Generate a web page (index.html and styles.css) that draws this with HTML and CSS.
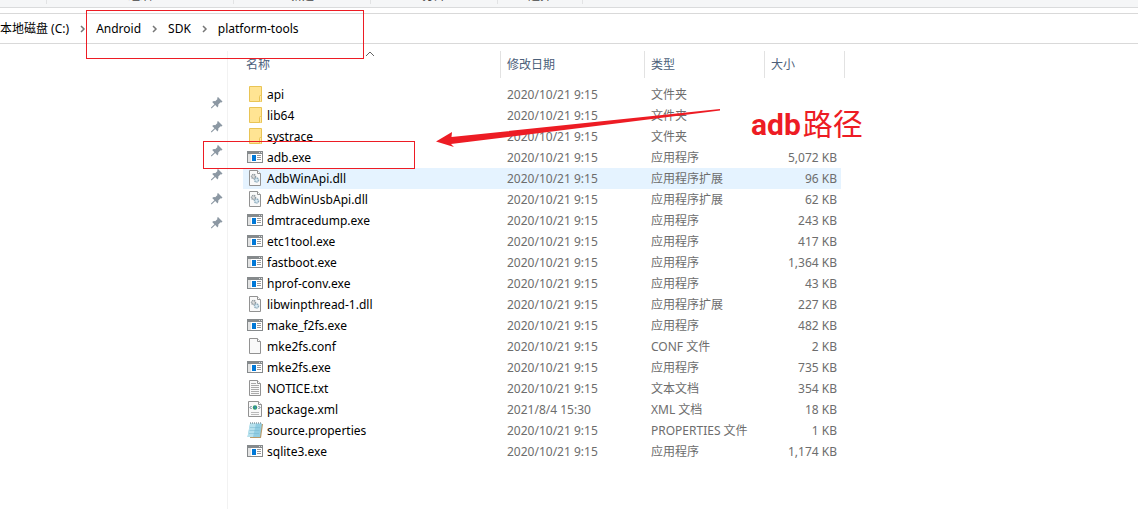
FILE: index.html
```html
<!DOCTYPE html>
<html lang="zh-CN">
<head>
<meta charset="utf-8">
<title>platform-tools</title>
<link rel="stylesheet" href="styles.css">
</head>
<body>
<svg class="defs" aria-hidden="true">
  <symbol id="folder" viewBox="0 0 16 16"><path d="M2.500.5h12v15h-12z" fill="#ffe493" stroke="#e9c455"/><path d="M12.500 15.500V10.500q0-1 1-1t1 1v5" fill="#ffe9a6" stroke="#e9c455"/></symbol>
  <symbol id="exe" viewBox="0 0 16 16"><path fill="#868a8c" d="M0 2h16v12H0z"/><path fill="#fff" d="M1 5h14v8H1z"/><path fill="#e3e4e4" d="M1 5h3v8H1z"/><path fill="#0078d7" d="M5 6h4v6H5z"/><path fill="#999" d="M10 6h4v1h-4zM10 8h4v1h-4zM10 10h4v1h-4z"/><path fill="#ddd" d="M12 3h1v1h-1zM14 3h1v1h-1z"/></symbol>
  <symbol id="page" viewBox="0 0 16 16"><path d="M2.500.5h8l3 3v12h-11z" fill="#f9f9f9" stroke="#929292"/><path d="M10.500.5v3h3" fill="#fff" stroke="#929292"/></symbol>
  <symbol id="dll" viewBox="0 0 16 16"><use href="#page"/><circle cx="6.500" cy="6.500" r="2" fill="#ddd" stroke="#8f989e" stroke-width="1.500" stroke-dasharray="1.200 .6"/><circle cx="9.500" cy="10" r="2" fill="#d9eaf4" stroke="#8eabbc" stroke-width="1.500" stroke-dasharray="1.200 .6"/></symbol>
  <symbol id="txt" viewBox="0 0 16 16"><use href="#page"/><path d="M4 3.500h5M4 5.500h8M4 7.500h8M4 9.500h8M4 11.500h8M4 13.500h8" stroke="#aaa"/></symbol>
  <symbol id="xml" viewBox="0 0 16 16"><path d="M1.500.5h10l3 3v12h-13z" fill="#f9f9f9" stroke="#929292"/><path d="M11.500.5v3h3" fill="#fff" stroke="#929292"/><circle cx="8" cy="6.500" r="2.200" fill="#2e9c68"/><path d="M7 5.500h2v2H8z" fill="#3b83d1"/><path d="M4.500 5 3 6.500 4.500 8M11.500 5 13 6.500 11.500 8" fill="none" stroke="#526b7d"/><path d="M4 11.500h8M4 13.500h8" stroke="#b9b9b9"/></symbol>
  <symbol id="note" viewBox="0 0 16 16"><path d="M4 2h12l-2 14H3z" fill="#b99a69"/><path d="M3 1.500h12L13 15H.5z" fill="#91cde2"/><path d="M3 1.500h6L6 15H.5z" fill="#b7e1ed"/><path d="M3 5.500h10M2.500 8.500h10M2 11.500h10" stroke="#75b6ce" stroke-width=".5"/><path d="M3 1h12" stroke="#536f79" stroke-dasharray="1 1"/></symbol>
  <symbol id="pin" viewBox="0 0 12 12"><path d="M7 0 11.500 4.500 10.500 5.500 9.700 5.200 7.300 7.500Q7.800 9.300 6.500 10.400L4.200 8 .8 11.300 0 11.200 0 10.500 3.400 7.200 1.200 5Q2.500 3.700 4.200 4.300L6.500 2 6.100 1z" fill="#8c98a3"/></symbol>
  <symbol id="chevron" viewBox="0 0 6 8"><path d="M1 1 4 4 1 7" fill="none" stroke="#777" stroke-width="1.500"/></symbol>
</svg>

<div class="ribbon">
  <span class="group group-first"></span>
  <span class="group group-organize">组织</span>
  <span class="group group-new">新建</span>
  <span class="group group-open">打开</span>
  <span class="group group-select">选择</span>
</div>

<nav class="address" aria-label="路径">
  <a href="#">本地磁盘 (C:)</a><svg class="sep"><use href="#chevron"/></svg>
  <a href="#">Android</a><svg class="sep"><use href="#chevron"/></svg>
  <a href="#">SDK</a><svg class="sep"><use href="#chevron"/></svg>
  <a href="#">platform-tools</a>
</nav>

<div class="explorer">
  <aside class="sidebar">
    <svg class="pin"><use href="#pin"/></svg>
    <svg class="pin"><use href="#pin"/></svg>
    <svg class="pin"><use href="#pin"/></svg>
    <svg class="pin"><use href="#pin"/></svg>
    <svg class="pin"><use href="#pin"/></svg>
    <svg class="pin"><use href="#pin"/></svg>
  </aside>
  <main class="files">
    <table>
      <colgroup><col class="col-name"><col class="col-date"><col class="col-type"><col class="col-size"></colgroup>
      <thead><tr>
        <th class="name"><button>名称</button><svg class="sort" viewBox="0 0 10 6"><path d="M1 5 5 1 9 5" fill="none" stroke="#666"/></svg></th>
        <th><button>修改日期</button></th><th><button>类型</button></th><th><button>大小</button></th>
      </tr></thead>
      <tbody>
        <tr><td class="name"><svg><use href="#folder"/></svg>api</td><td>2020/10/21 9:15</td><td>文件夹</td><td class="size"></td></tr>
        <tr><td class="name"><svg><use href="#folder"/></svg>lib64</td><td>2020/10/21 9:15</td><td>文件夹</td><td class="size"></td></tr>
        <tr><td class="name"><svg><use href="#folder"/></svg>systrace</td><td>2020/10/21 9:15</td><td>文件夹</td><td class="size"></td></tr>
        <tr><td class="name"><svg><use href="#exe"/></svg>adb.exe</td><td>2020/10/21 9:15</td><td>应用程序</td><td class="size">5,072 KB</td></tr>
        <tr class="hover"><td class="name"><svg><use href="#dll"/></svg>AdbWinApi.dll</td><td>2020/10/21 9:15</td><td>应用程序扩展</td><td class="size">96 KB</td></tr>
        <tr><td class="name"><svg><use href="#dll"/></svg>AdbWinUsbApi.dll</td><td>2020/10/21 9:15</td><td>应用程序扩展</td><td class="size">62 KB</td></tr>
        <tr><td class="name"><svg><use href="#exe"/></svg>dmtracedump.exe</td><td>2020/10/21 9:15</td><td>应用程序</td><td class="size">243 KB</td></tr>
        <tr><td class="name"><svg><use href="#exe"/></svg>etc1tool.exe</td><td>2020/10/21 9:15</td><td>应用程序</td><td class="size">417 KB</td></tr>
        <tr><td class="name"><svg><use href="#exe"/></svg>fastboot.exe</td><td>2020/10/21 9:15</td><td>应用程序</td><td class="size">1,364 KB</td></tr>
        <tr><td class="name"><svg><use href="#exe"/></svg>hprof-conv.exe</td><td>2020/10/21 9:15</td><td>应用程序</td><td class="size">43 KB</td></tr>
        <tr><td class="name"><svg><use href="#dll"/></svg>libwinpthread-1.dll</td><td>2020/10/21 9:15</td><td>应用程序扩展</td><td class="size">227 KB</td></tr>
        <tr><td class="name"><svg><use href="#exe"/></svg>make_f2fs.exe</td><td>2020/10/21 9:15</td><td>应用程序</td><td class="size">482 KB</td></tr>
        <tr><td class="name"><svg><use href="#page"/></svg>mke2fs.conf</td><td>2020/10/21 9:15</td><td>CONF 文件</td><td class="size">2 KB</td></tr>
        <tr><td class="name"><svg><use href="#exe"/></svg>mke2fs.exe</td><td>2020/10/21 9:15</td><td>应用程序</td><td class="size">735 KB</td></tr>
        <tr><td class="name"><svg><use href="#txt"/></svg>NOTICE.txt</td><td>2020/10/21 9:15</td><td>文本文档</td><td class="size">354 KB</td></tr>
        <tr><td class="name"><svg><use href="#xml"/></svg>package.xml</td><td>2021/8/4 15:30</td><td>XML 文档</td><td class="size">18 KB</td></tr>
        <tr><td class="name"><svg><use href="#note"/></svg>source.properties</td><td>2020/10/21 9:15</td><td>PROPERTIES 文件</td><td class="size">1 KB</td></tr>
        <tr><td class="name"><svg><use href="#exe"/></svg>sqlite3.exe</td><td>2020/10/21 9:15</td><td>应用程序</td><td class="size">1,174 KB</td></tr>
      </tbody>
    </table>
  </main>
</div>

<div class="mark mark-path"></div>
<div class="mark mark-file"></div>
<svg class="arrow" viewBox="0 0 284 38"><path d="M0 32.500 16 23 15.500 28 284 0 284 1.500 15 35 18 38z" fill="#ed1c24"/></svg>
<div class="note">adb<span class="note-cjk">路径</span></div>
</body>
</html>
```
FILE: styles.css
```css
* { box-sizing: border-box; }
body {
  margin: 0;
  position: relative;
  min-height: 100vh;
  display: flex;
  flex-direction: column;
  background: #fff;
  color: #000;
  font: 12px/20px "Noto Sans", "Noto Sans CJK SC", sans-serif;
}
.defs { position: absolute; width: 0; height: 0; }

.ribbon {
  display: flex;
  height: 8px;
  overflow: hidden;
  background: #f5f6f7;
  border-bottom: 1px solid #dadbdc;
}
.group {
  display: flex;
  align-items: flex-end;
  justify-content: center;
  height: 4px;
  border-right: 1px solid #e2e3e4;
  line-height: 16px;
  color: #444;
}
.group-first { width: 47px; }
.group-organize { width: 187px; }
.group-new { width: 137px; }
.group-open { width: 127px; }
.group-select { width: 85px; }

.address {
  display: flex;
  align-items: center;
  gap: 10px;
  height: 31px;
  margin-top: 5px;
  border-top: 1px solid #d9d9d9;
  border-bottom: 1px solid #d9d9d9;
}
.address a { color: #000; text-decoration: none; }
.address a + .sep { margin-left: 1px; }
.sep { width: 6px; height: 8px; }

.explorer { display: flex; flex: 1; padding-top: 7px; }
.sidebar {
  display: flex;
  flex-direction: column;
  align-items: flex-end;
  gap: 12px;
  width: 228px;
  padding: 46px 4px 0 0;
  border-right: 1px solid #f2f2f2;
}
.pin { width: 12px; height: 12px; }

.files { flex: 1; padding-left: 15px; }
table { width: 602px; table-layout: fixed; border-collapse: separate; border-spacing: 0; }
.col-name { width: 258px; }
.col-date { width: 144px; }
.col-type { width: 120px; }
.col-size { width: 80px; }
th {
  position: relative;
  height: 27px;
  padding: 0 0 0 6px;
  border-right: 1px solid #e2e2e2;
  text-align: left;
}
th.name { padding-left: 3px; }
th button {
  display: block;
  padding: 0;
  border: 0;
  background: none;
  color: #4c607a;
  font: inherit;
  font-weight: 400;
}
.sort { position: absolute; top: 0; left: 122px; width: 10px; height: 6px; }
tbody::before { content: ""; display: block; height: 6px; }
td {
  height: 21px;
  padding: 0 0 0 6px;
  background-clip: padding-box;
  color: #6d6d6d;
  white-space: nowrap;
}
td.name { padding-left: 4px; color: #000; }
td.name svg { width: 16px; height: 16px; margin-right: 4px; vertical-align: -3px; }
td.size { padding: 0 4px 0 0; border-right: 4px solid transparent; text-align: right; }
.hover td { background-color: #e5f3ff; }

.mark { position: absolute; border: 1px solid #ed1c24; }
.mark-path { top: 10px; left: 86px; width: 278px; height: 49px; }
.mark-file { top: 141px; left: 203px; width: 212px; height: 28px; }
.arrow { position: absolute; top: 109px; left: 436px; width: 284px; height: 38px; }
.note {
  position: absolute;
  top: 105px;
  left: 751px;
  color: #ed1c24;
  font: 700 30px/40px Roboto, "Noto Sans CJK SC", sans-serif;
}
.note-cjk { margin-left: 2px; font-weight: 400; }
```
